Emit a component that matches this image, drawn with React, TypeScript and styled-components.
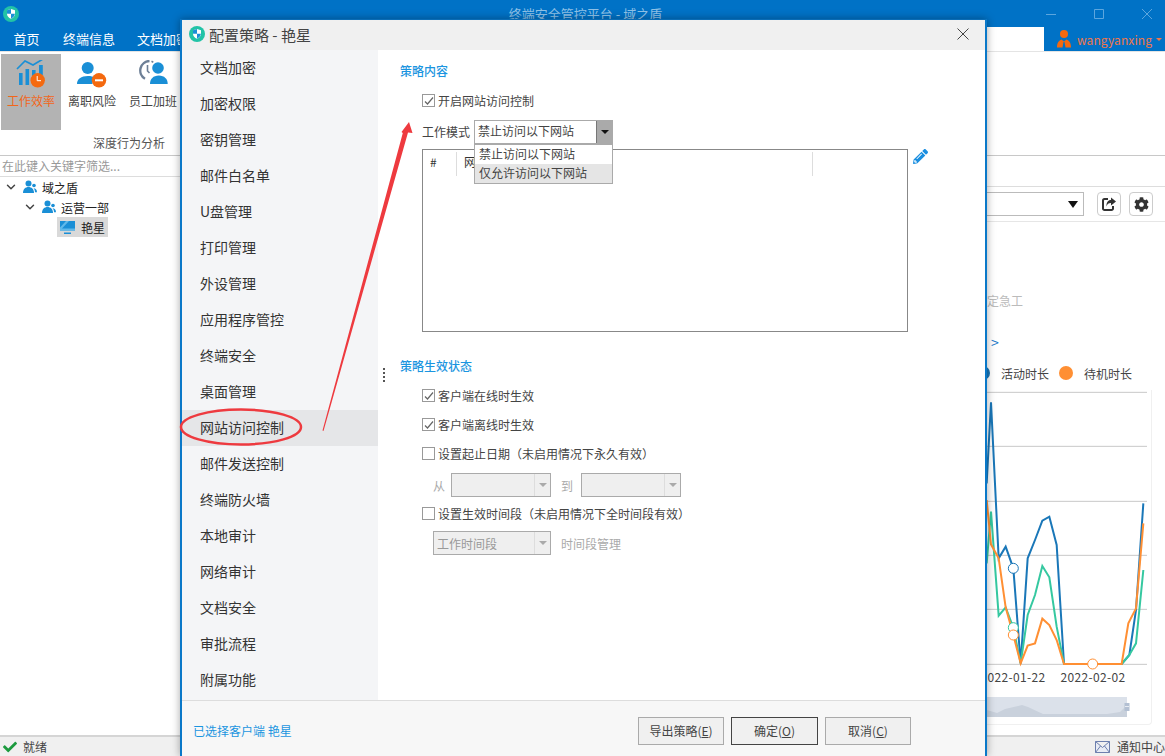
import React, { FC } from 'react'
import styled, { createGlobalStyle } from 'styled-components'
import { ChevronDown } from 'lucide-react'
import { FaCheck, FaCog, FaPencilAlt } from 'react-icons/fa'

const FONT = '"Noto Sans CJK SC", "Liberation Sans", sans-serif'

const MENU = ['文档加密', '加密权限', '密钥管理', '邮件白名单', 'U盘管理', '打印管理', '外设管理', '应用程序管控', '终端安全', '桌面管理', '网站访问控制', '邮件发送控制', '终端防火墙', '本地审计', '网络审计', '文档安全', '审批流程', '附属功能']

const BLUE_LINE = '80,400 93,157 116,625 137,590 160,655 182,940 203,625 225,570 247,512 268,500 290,585 312,942 485,942 508,915 528,780 550,460'
const GREEN_LINE = '80,640 93,485 116,797 137,772 160,833 182,940 203,795 225,735 247,648 268,682 290,830 312,942 485,942 508,915 528,880 550,660'
const ORANGE_LINE = '80,450 93,583 116,625 137,772 160,855 182,940 203,887 225,880 247,806 268,825 290,870 312,942 485,942 505,820 528,775 550,520'
const GRID_Y = [127, 289, 454, 616, 778, 943]

const Logo: FC<{ size: number }> = ({ size }) => (
    <svg width={size} height={size} viewBox="0 0 16 16">
        <circle cx="8" cy="8" r="8" fill="#22c3a6" />
        <path d="M8 3l4 1.300v3.400c0 2.500-1.700 4-4 5-2.300-1-4-2.500-4-5V4.300z" fill="#fff" />
        <path d="M8 3v4.700H4.200C4.100 7.300 4 7.500 4 7.700V4.300zM8 7.700h3.900c-.2 2.300-1.800 4-3.900 5z" fill="#1a8fd6" />
    </svg>
)

const PersonGroup: FC = () => (
    <svg width="14" height="14" viewBox="0 0 14 14">
        <circle cx="5.500" cy="3.500" r="3" fill="#1a8fd6" />
        <path d="M0 13c0-4 2.500-6 5.500-6s5.500 2 5.500 6z" fill="#1a8fd6" />
        <circle cx="11" cy="5.500" r="1.800" fill="#1a8fd6" />
        <path d="M10.500 8.200c2 0 3.500 1.200 3.500 4h-2c0-1.500-.5-3-1.500-4z" fill="#1a8fd6" />
    </svg>
)

const Monitor: FC = () => (
    <svg width="15" height="13" viewBox="0 0 15 13">
        <path d="M0 0h15v9.500H0z" fill="#1a8fd6" />
        <path d="M0 6.500L6 0h3L2 7.500h13v2H0z" fill="#5fb9ea" />
        <path d="M4 11.500h7V13H4z" fill="#1a8fd6" />
    </svg>
)

const EfficiencyIcon: FC = () => (
    <svg width="30" height="30" viewBox="0 0 30 30">
        <path d="M1 9l8-8 8 4 10-6" fill="none" stroke="#1a8fd6" strokeWidth="1.700" />
        <path d="M3 13h3.600v12H3zM9.500 9h3.600v16H9.500zM16 10h3.600v15H16zM23 5h3.800v10H23z" fill="#1a8fd6" />
        <circle cx="21.700" cy="20.300" r="7.200" fill="#f4690f" />
        <path d="M21.200 16v4.700h3.800" fill="none" stroke="#fff" strokeWidth="1" />
    </svg>
)

const RiskIcon: FC = () => (
    <svg width="30" height="30" viewBox="0 0 30 30">
        <circle cx="10.700" cy="8" r="6" fill="#1a8fd6" />
        <path d="M0 24c0-5 4-8 11-8 3 0 5 .5 7 1.500-2 2-3 4-2.500 6.500z" fill="#1a8fd6" />
        <circle cx="22" cy="20.300" r="7.200" fill="#f4690f" />
        <path d="M18 19.300h8v2h-8z" fill="#fff" />
    </svg>
)

const OvertimeIcon: FC = () => (
    <svg width="30" height="30" viewBox="0 0 30 30">
        <path d="M11.500 1A9.500 9.500 0 0 0 7 18.700" fill="none" stroke="#6d7f96" strokeWidth="2.400" />
        <path d="M13.500 1.300l1.800.9M9.500 5v6l2 2" fill="none" stroke="#6d7f96" strokeWidth="1.600" />
        <circle cx="20" cy="8" r="5.800" fill="#1a8fd6" />
        <path d="M12 24c0-5 3.200-8.500 8.800-8.500S29.700 19 29.700 24z" fill="#1a8fd6" />
    </svg>
)

const ShareIcon: FC = () => (
    <svg width="16" height="16" viewBox="0 0 16 16">
        <path d="M7 3H3.500A1.500 1.500 0 0 0 2 4.500v8A1.500 1.500 0 0 0 3.500 14h7a1.500 1.500 0 0 0 1.500-1.500V10" fill="none" stroke="#333" strokeWidth="2" />
        <path d="M10 1.500l5 4-5 4V7C7.500 7 6 8 5.500 10.500 5.200 6.500 7 4 10 4z" fill="#333" />
    </svg>
)

const CheckBox: FC<{ checked?: boolean }> = ({ checked }) => (
    <Box>
        {checked && (
            <svg width="10" height="10" viewBox="0 0 10 10">
                <path d="M1 5.500l2.500 2.500L9 1.500" fill="none" stroke="#666" strokeWidth="1.200" />
            </svg>
        )}
    </Box>
)

const Dropdown: FC<{ width: number; text?: string }> = ({ width, text }) => (
    <DisabledSelect $width={width}>
        <span>{text}</span>
        <i />
    </DisabledSelect>
)

const Label: FC<{ letter: string; text: string }> = ({ letter, text }) => (
    <>{text}(<u>{letter}</u>)</>
)

const App: FC = () => {
    return (
        <Page>
            <GlobalStyle />
            <TitleBar>
                <TitleLogo><Logo size={16} /></TitleLogo>
                <TitleText>终端安全管控平台 - 域之盾</TitleText>
                <WindowControls>
                    <svg width="10" height="10" viewBox="0 0 10 10"><path d="M0 5.500h10" stroke="#5ca6de" /></svg>
                    <svg width="10" height="10" viewBox="0 0 10 10"><path d="M.5.500h9v9h-9z" fill="none" stroke="#5ca6de" /></svg>
                    <svg width="10" height="10" viewBox="0 0 10 10"><path d="M0 0l10 10M10 0L0 10" stroke="#5ca6de" /></svg>
                </WindowControls>
            </TitleBar>

            <NavBar>
                <NavTabs>
                    <NavTab $width={51}>首页</NavTab>
                    <NavTab $width={74}>终端信息</NavTab>
                    <NavTab $width={74}>文档加密</NavTab>
                </NavTabs>
                <NavGap />
                <UserBox>
                    <svg width="14" height="18" viewBox="0 0 14 18">
                        <circle cx="7" cy="4" r="4" fill="#f4690f" />
                        <path d="M0 17.500c0-5 2-7 4.500-8L7 11.500l2.500-2c2.500 1 4.500 3 4.500 8H8.500l-1-5.500h-1l-1 5.500z" fill="#f4690f" />
                    </svg>
                    <UserName>wangyanxing</UserName>
                    <UserCaret />
                </UserBox>
            </NavBar>

            <Ribbon>
                <RibbonGroup>
                    <RibbonButtons>
                        <RibbonButton $active>
                            <EfficiencyIcon />
                            <RibbonLabel $active>工作效率</RibbonLabel>
                        </RibbonButton>
                        <RibbonButton>
                            <RiskIcon />
                            <RibbonLabel>离职风险</RibbonLabel>
                        </RibbonButton>
                        <RibbonButton>
                            <OvertimeIcon />
                            <RibbonLabel>员工加班</RibbonLabel>
                        </RibbonButton>
                    </RibbonButtons>
                    <RibbonTitle>深度行为分析</RibbonTitle>
                </RibbonGroup>
            </Ribbon>

            <Body>
                <Sidebar>
                    <Search>在此键入关键字筛选...</Search>
                    <TreeRow $depth={0}>
                        <ChevronDown size={14} color="#444" strokeWidth={2.500} />
                        <PersonGroup />
                        <TreeText>域之盾</TreeText>
                    </TreeRow>
                    <TreeRow $depth={1}>
                        <ChevronDown size={14} color="#444" strokeWidth={2.500} />
                        <PersonGroup />
                        <TreeText>运营一部</TreeText>
                    </TreeRow>
                    <TreeLeaf>
                        <Monitor />
                        <TreeText>艳星</TreeText>
                    </TreeLeaf>
                </Sidebar>

                <Content>
                    <FilterRow>
                        <FilterSelect><b /></FilterSelect>
                        <ToolButton><ShareIcon /></ToolButton>
                        <ToolButton><FaCog size={15} /></ToolButton>
                    </FilterRow>
                    <Hint>定急工</Hint>
                    <MoreLink>&gt;</MoreLink>
                    <Legend>
                        <LegendDot $color="#1a77b8" />
                        <LegendText>活动时长</LegendText>
                        <LegendDot $color="#ff8f33" />
                        <LegendText>待机时长</LegendText>
                    </Legend>
                    <ChartCard>
                        <ChartSvg width="205" height="307" viewBox="0 120 615 921">
                            {GRID_Y.map(y => <line key={y} x1="0" x2="561" y1={y} y2={y} stroke="#c8c8c8" strokeWidth="3" />)}
                            <polyline points={BLUE_LINE} fill="none" stroke="#1a77b8" strokeWidth="6" />
                            <polyline points={GREEN_LINE} fill="none" stroke="#35c8a0" strokeWidth="6" />
                            <polyline points={ORANGE_LINE} fill="none" stroke="#ff8f33" strokeWidth="6" />
                            <circle cx="160" cy="655" r="15" fill="#fff" stroke="#1a77b8" strokeWidth="3" />
                            <circle cx="160" cy="833" r="15" fill="#fff" stroke="#35c8a0" strokeWidth="3" />
                            <circle cx="160" cy="855" r="15" fill="#fff" stroke="#ff8f33" strokeWidth="3" />
                            <circle cx="398" cy="942" r="15" fill="#fff" stroke="#ff8f33" strokeWidth="3" />
                            <text x="159" y="995" textAnchor="middle" fontSize="36" fill="#444" fontFamily={FONT} letterSpacing="1">2022-01-22</text>
                            <text x="399" y="995" textAnchor="middle" fontSize="36" fill="#444" fontFamily={FONT} letterSpacing="1">2022-02-02</text>
                        </ChartSvg>
                        <ZoomSlider>
                            <svg width="172" height="20" viewBox="0 0 172 20">
                                <path d="M0 12l27 1 10 3 8-4 17-4 6 2 15 7h64l13-2 7-7v12H0z" fill="#c9d1dc" />
                                <path d="M164.500 6h5v8h-5z" fill="#b3c0d3" />
                                <path d="M165 9h4v1h-4z" fill="#e8ecf2" />
                            </svg>
                        </ZoomSlider>
                    </ChartCard>
                </Content>
            </Body>

            <StatusBar>
                <FaCheck size={14} color="#1c9a3e" />
                <StatusText>就绪</StatusText>
                <Notice>
                    <svg width="15" height="12" viewBox="0 0 15 12">
                        <path d="M.5.500h14v11H.5zM.5.500l7 6 7-6M.5 11.500l5-6.500M14.500 11.500l-5-6.500" fill="#e8ecf5" stroke="#6d7fae" />
                    </svg>
                    <StatusText>通知中心</StatusText>
                </Notice>
            </StatusBar>

            <Dialog>
                <DialogHeader>
                    <Logo size={16} />
                    <DialogTitle>配置策略 - 艳星</DialogTitle>
                    <CloseIcon width="12" height="12" viewBox="0 0 12 12">
                        <path d="M.5.500l11 11M11.500.500l-11 11" stroke="#444" />
                    </CloseIcon>
                </DialogHeader>
                <DialogBody>
                    <Menu>
                        {MENU.map(item => <MenuItem key={item} $active={item === '网站访问控制'}>{item}</MenuItem>)}
                    </Menu>
                    <Panel>
                        <DragDots />
                        <SectionTitle>策略内容</SectionTitle>
                        <CheckRow><CheckBox checked />开启网站访问控制</CheckRow>
                        <ModeRow>
                            <span>工作模式</span>
                            <ComboWrap>
                                <Combo>
                                    <span>禁止访问以下网站</span>
                                    <ComboButton />
                                </Combo>
                                <ComboList>
                                    <ComboOption>禁止访问以下网站</ComboOption>
                                    <ComboOption $hover>仅允许访问以下网站</ComboOption>
                                </ComboList>
                            </ComboWrap>
                        </ModeRow>
                        <TableRow>
                            <SiteTable>
                                <SiteHead>
                                    <SiteCell $width={34}>#</SiteCell>
                                    <SiteCell $width={356}>网</SiteCell>
                                </SiteHead>
                            </SiteTable>
                            <EditIcon><FaPencilAlt size={15} color="#1b8fe0" /></EditIcon>
                        </TableRow>
                        <SectionTitle $second>策略生效状态</SectionTitle>
                        <CheckRow><CheckBox checked />客户端在线时生效</CheckRow>
                        <CheckRow><CheckBox checked />客户端离线时生效</CheckRow>
                        <CheckRow><CheckBox />设置起止日期（未启用情况下永久有效）</CheckRow>
                        <DisabledRow $first>
                            <span>从</span>
                            <Dropdown width={100} />
                            <span>到</span>
                            <Dropdown width={100} />
                        </DisabledRow>
                        <CheckRow><CheckBox />设置生效时间段（未启用情况下全时间段有效）</CheckRow>
                        <DisabledRow>
                            <Dropdown width={118} text="工作时间段" />
                            <span>时间段管理</span>
                        </DisabledRow>
                    </Panel>
                </DialogBody>
                <DialogFooter>
                    <Selected>已选择客户端 艳星</Selected>
                    <FooterButton><Label text="导出策略" letter="E" /></FooterButton>
                    <FooterButton $primary><Label text="确定" letter="O" /></FooterButton>
                    <FooterButton><Label text="取消" letter="C" /></FooterButton>
                </DialogFooter>
            </Dialog>

            {/* red marks drawn on top of the screenshot */}
            <Annotations width="1165" height="756" viewBox="0 0 1165 756">
                <ellipse cx="241" cy="427" rx="60" ry="17.500" fill="none" stroke="#ee3a3f" strokeWidth="2.500" />
                <path d="M322.500 430.500L402.800 133l-1.300-1L409 122l3.500 11-4.500-.5L323.500 431z" fill="#ee3a3f" />
            </Annotations>
        </Page>
    )
}

const GlobalStyle = createGlobalStyle`
html, body {
  margin: 0;
  padding: 0;
  background: #fff;
}
* {
  box-sizing: border-box;
}
body {
  font-family: ${FONT};
  font-size: 12px;
  color: #444;
}
`

const Page = styled.div`
position: relative;
width: 1165px;
height: 756px;
overflow: hidden;
display: flex;
flex-direction: column;
background: #fff;
`

const TitleBar = styled.div`
height: 27px;
flex: none;
display: flex;
align-items: center;
background: #0072c6;
`

const TitleLogo = styled.div`
width: 120px;
padding-left: 3px;
display: flex;
`

const TitleText = styled.div`
flex: 1;
text-align: center;
padding-left: 6px;
color: #8fc1e6;
font-size: 13px;
`

const WindowControls = styled.div`
width: 120px;
display: flex;
gap: 38px;
padding-left: 1px;
svg {
  display: block;
}
`

const NavBar = styled.div`
height: 24px;
flex: none;
display: flex;
`

const NavTabs = styled.div`
width: 700px;
display: flex;
padding-left: 1px;
background: #0072c6;
`

const NavTab = styled.div<{ $width: number }>`
width: ${p => p.$width}px;
text-align: center;
color: #fff;
font-size: 13px;
line-height: 24px;
`

const NavGap = styled.div`
flex: 1;
background: #fff;
`

const UserBox = styled.div`
width: 121px;
display: flex;
align-items: center;
padding-left: 13px;
background: #0072c6;
`

const UserName = styled.span`
margin-left: 6px;
color: #f0764a;
font-size: 12px;
letter-spacing: .1px;
`

const UserCaret = styled.i`
margin-left: 4px;
border: 3px solid transparent;
border-top: 3px solid #f0764a;
margin-top: 3px;
`

const Ribbon = styled.div`
height: 105px;
flex: none;
padding: 2px 0 0 1px;
border-top: 1px solid #e4e4e4;
border-bottom: 1px solid #c8c8c8;
background: #fff;
`

const RibbonGroup = styled.div`
width: 256px;
`

const RibbonButtons = styled.div`
display: flex;
gap: 1px;
`

const RibbonButton = styled.div<{ $active?: boolean }>`
width: 60px;
height: 76px;
padding-top: 6px;
display: flex;
flex-direction: column;
align-items: center;
background: ${p => p.$active ? '#b3b3b3' : 'transparent'};
`

const RibbonLabel = styled.span<{ $active?: boolean }>`
margin-top: 2px;
font-size: 12px;
color: ${p => p.$active ? '#f2661a' : '#444'};
`

const RibbonTitle = styled.div`
margin-top: 4px;
text-align: center;
font-size: 12px;
color: #555;
`

const Body = styled.div`
flex: 1;
min-height: 0;
display: flex;
`

const Sidebar = styled.div`
width: 180px;
flex: none;
`

const Search = styled.div`
height: 21px;
padding-left: 2px;
border-bottom: 1px solid #ddd;
font-size: 12px;
line-height: 20px;
color: #999;
`

const TreeRow = styled.div<{ $depth: number }>`
height: 20px;
padding-left: ${p => 4 + p.$depth * 19}px;
display: flex;
align-items: center;
gap: 5px;
`

const TreeLeaf = styled.div`
width: 51px;
height: 20px;
margin-left: 57px;
padding-left: 3px;
display: flex;
align-items: center;
gap: 6px;
background: #d9d9d9;
`

const TreeText = styled.span`
font-size: 12px;
color: #222;
`

const Content = styled.div`
flex: 1;
min-width: 0;
padding-top: 30px;
display: flex;
flex-direction: column;
`

const FilterRow = styled.div`
height: 36px;
flex: none;
display: flex;
align-items: center;
justify-content: flex-end;
gap: 8px;
padding-right: 12px;
border-top: 1px solid #ddd;
border-bottom: 1px solid #e6e6e6;
`

const FilterSelect = styled.div`
width: 400px;
height: 24px;
margin-right: 5px;
display: flex;
align-items: center;
justify-content: flex-end;
padding-right: 5px;
border: 1px solid #bbb;
b {
  border: 5px solid transparent;
  border-top: 7px solid #111;
  border-bottom: 0;
}
`

const ToolButton = styled.div`
width: 24px;
height: 24px;
display: flex;
align-items: center;
justify-content: center;
border: 1px solid #ccc;
border-radius: 4px;
color: #333;
`

const Hint = styled.div`
margin: 70px 0 0 807px;
font-size: 12px;
line-height: 18px;
color: #bbb;
`

const MoreLink = styled.div`
margin: 23px 0 0 811px;
font-size: 14px;
line-height: 18px;
color: #1a77c8;
`

const Legend = styled.div`
margin: 13px 0 0 796px;
height: 18px;
display: flex;
align-items: center;
`

const LegendDot = styled.i<{ $color: string }>`
width: 14px;
height: 14px;
border-radius: 50%;
background: ${p => p.$color};
`

const LegendText = styled.span`
width: 58px;
margin-left: 11px;
font-size: 12px;
color: #444;
`

const ChartCard = styled.div`
position: relative;
width: 192px;
height: 335px;
margin: 8px 0 0 780px;
border-bottom: 1px solid #f0f0f0;
border-right: 1px solid #f0f0f0;
border-radius: 0 0 4px 0;
`

const ChartSvg = styled.svg`
display: block;
`

const ZoomSlider = styled.div`
height: 20px;
width: 167px;
background: #dbe1ea;
svg {
  display: block;
}
`

const StatusBar = styled.div`
height: 21px;
flex: none;
display: flex;
align-items: center;
padding-left: 3px;
border-top: 2px solid #d5d5d5;
background: #f0f0f0;
`

const StatusText = styled.span`
margin-left: 6px;
font-size: 12px;
color: #444;
white-space: nowrap;
`

const Notice = styled.div`
margin-left: auto;
margin-right: -3px;
width: 73px;
display: flex;
align-items: center;
svg {
  margin-right: 1px;
}
`

const Dialog = styled.div`
position: absolute;
left: 180px;
top: 19px;
width: 807px;
height: 737px;
display: flex;
flex-direction: column;
background: #fff;
border-left: 2px solid #0a78c8;
border-right: 2px solid #0a78c8;
border-top: 1px solid #0a6cb5;
box-shadow: 0 0 8px rgba(0, 0, 0, .35);
`

const DialogHeader = styled.div`
height: 30px;
flex: none;
display: flex;
align-items: center;
padding: 0 16px 2px 7px;
background: #f0f0f0;
`

const DialogTitle = styled.span`
flex: 1;
margin-left: 4px;
font-size: 15px;
color: #444;
`

const CloseIcon = styled.svg`
display: block;
`

const DialogBody = styled.div`
flex: 1;
min-height: 0;
display: flex;
`

const Menu = styled.div`
width: 196px;
flex: none;
background: #f4f5f7;
`

const MenuItem = styled.div<{ $active?: boolean }>`
height: 36px;
padding-left: 18px;
font-size: 14px;
line-height: 34px;
color: #333;
background: ${p => p.$active ? '#e5e6e8' : 'transparent'};
`

const Panel = styled.div`
position: relative;
flex: 1;
padding: 12px 0 0 22px;
`

const DragDots = styled.i`
position: absolute;
left: 5px;
top: 318px;
width: 2px;
height: 14px;
background: repeating-linear-gradient(#555 0 2px, transparent 2px 4px);
`

const SectionTitle = styled.div<{ $second?: boolean }>`
height: 18px;
margin-top: ${p => p.$second ? '25px' : '0'};
margin-bottom: 6px;
font-size: 12px;
font-weight: 500;
line-height: 18px;
color: #1b95e0;
`

const CheckRow = styled.div`
height: 29px;
margin-left: 22px;
display: flex;
align-items: center;
font-size: 12px;
color: #444;
`

const Box = styled.span`
width: 13px;
height: 13px;
margin-right: 3px;
display: flex;
align-items: center;
justify-content: center;
border: 1px solid #999;
background: #fff;
`

const ModeRow = styled.div`
height: 24px;
margin: 5px 0 0 22px;
display: flex;
align-items: center;
gap: 4px;
font-size: 12px;
line-height: 16px;
color: #444;
`

const ComboWrap = styled.div`
position: relative;
z-index: 1;
`

const Combo = styled.div`
width: 139px;
height: 24px;
display: flex;
align-items: center;
padding-left: 3px;
border: 1px solid #aaa;
background: #fff;
span {
  flex: 1;
  margin-top: -2px;
}
`

const ComboButton = styled.i`
width: 16px;
height: 22px;
display: flex;
align-items: center;
justify-content: center;
background: #aaa;
border-left: 1px solid #777;
&::after {
  content: '';
  border: 4px solid transparent;
  border-top: 4px solid #111;
  border-bottom: 0;
}
`

const ComboList = styled.div`
position: absolute;
left: 0;
top: 24px;
width: 139px;
border: 1px solid #aaa;
background: #fff;
`

const ComboOption = styled.div<{ $hover?: boolean }>`
height: 19px;
padding-left: 4px;
line-height: 17px;
font-size: 12px;
color: #444;
background: ${p => p.$hover ? '#e5e5e5' : '#fff'};
`

const TableRow = styled.div`
margin: 5px 0 0 22px;
display: flex;
gap: 5px;
`

const SiteTable = styled.div`
width: 486px;
height: 183px;
padding-top: 2px;
border: 1px solid #888;
`

const SiteHead = styled.div`
display: flex;
height: 24px;
`

const SiteCell = styled.div<{ $width: number }>`
width: ${p => p.$width}px;
padding-left: 7px;
border-right: 1px solid #ddd;
font-size: 12px;
line-height: 20px;
color: #333;
`

const EditIcon = styled.span`
display: block;
`

const DisabledRow = styled.div<{ $first?: boolean }>`
height: 30px;
margin: ${p => p.$first ? '2px 0 -1px 33px' : '0 0 0 33px'};
display: flex;
align-items: center;
gap: 6px;
font-size: 12px;
color: #aaa;
div + span {
  margin: 0 2px 0 4px;
}
`

const DisabledSelect = styled.div<{ $width: number }>`
width: ${p => p.$width}px;
height: 24px;
display: flex;
align-items: center;
border: 1px solid #aaa;
background: #efefef;
color: #999;
font-size: 12px;
span {
  flex: 1;
  padding-left: 3px;
}
i {
  width: 16px;
  height: 22px;
  display: flex;
  align-items: center;
  justify-content: center;
  border-left: 1px solid #ddd;
}
i::after {
  content: '';
  border: 4px solid transparent;
  border-top: 4px solid #aaa;
  border-bottom: 0;
}
`

const DialogFooter = styled.div`
height: 56px;
flex: none;
display: flex;
align-items: center;
gap: 7px;
padding: 4px 74px 0 11px;
border-top: 1px solid #ddd;
background: #f7f7f7;
`

const Selected = styled.span`
margin-right: auto;
font-size: 12px;
color: #1b95e0;
`

const FooterButton = styled.div<{ $primary?: boolean }>`
width: ${p => p.$primary ? '87px' : '86px'};
height: 28px;
border: 1px solid ${p => p.$primary ? '#444' : '#aaa'};
background: #f0f0f0;
text-align: center;
font-size: 12px;
line-height: 26px;
color: #444;
`

const Annotations = styled.svg`
position: absolute;
left: 0;
top: 0;
pointer-events: none;
`

export default App
